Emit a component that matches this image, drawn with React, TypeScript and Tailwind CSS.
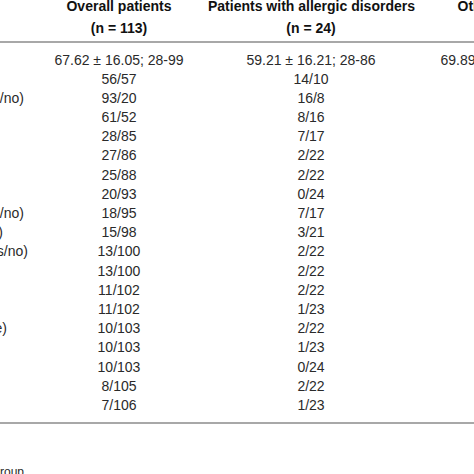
import React from "react";

type Row = { label: string; pr: string; a: string; b: string; c: string };

const rows: Row[] = [
  { label: "", pr: "pr-[6px]", a: "67.62 ± 16.05; 28-99", b: "59.21 ± 16.21; 28-86", c: "69.89 ± 15.36; 30-99" },
  { label: "", pr: "pr-[6px]", a: "56/57", b: "14/10", c: "42/47" },
  { label: "Hypertension (yes/no)", pr: "pr-[6px]", a: "93/20", b: "16/8", c: "77/12" },
  { label: "", pr: "pr-[6px]", a: "61/52", b: "8/16", c: "53/36" },
  { label: "", pr: "pr-[6px]", a: "28/85", b: "7/17", c: "21/68" },
  { label: "", pr: "pr-[6px]", a: "27/86", b: "2/22", c: "25/64" },
  { label: "", pr: "pr-[6px]", a: "25/88", b: "2/22", c: "23/66" },
  { label: "", pr: "pr-[6px]", a: "20/93", b: "0/24", c: "20/69" },
  { label: "Chronic kidney disease (yes/no)", pr: "pr-[6px]", a: "18/95", b: "7/17", c: "11/78" },
  { label: "Dementia (%)", pr: "pr-[27px]", a: "15/98", b: "3/21", c: "12/77" },
  { label: "Atrial fibrillation (yes/no)", pr: "pr-[2px]", a: "13/100", b: "2/22", c: "11/78" },
  { label: "", pr: "pr-[6px]", a: "13/100", b: "2/22", c: "11/78" },
  { label: "", pr: "pr-[6px]", a: "11/102", b: "2/22", c: "9/80" },
  { label: "", pr: "pr-[6px]", a: "11/102", b: "1/23", c: "10/79" },
  { label: "Hepatopathy (%e)", pr: "pr-[23px]", a: "10/103", b: "2/22", c: "8/81" },
  { label: "", pr: "pr-[6px]", a: "10/103", b: "1/23", c: "9/80" },
  { label: "", pr: "pr-[6px]", a: "10/103", b: "0/24", c: "10/79" },
  { label: "", pr: "pr-[6px]", a: "8/105", b: "2/22", c: "6/83" },
  { label: "", pr: "pr-[6px]", a: "7/106", b: "1/23", c: "6/83" },
];

export default function App() {
  return (
    <div
      className="w-[474px] h-[474px] overflow-hidden bg-white text-[#2a2a2a]"
      style={{ fontFamily: '"Liberation Sans", Arial, sans-serif' }}
    >
      <div className="w-[596px]">
        <div className="-mt-[5px] pb-[2px] border-b-2 border-[#a8a8a8] grid grid-cols-[30px_178px_206px_182px] text-[14px] leading-[22px] font-bold text-[#111]">
          <div />
          <div className="text-center whitespace-nowrap">Overall patients<br />(n = 113)</div>
          <div className="text-center whitespace-nowrap">Patients with allergic disorders<br />(n = 24)</div>
          <div className="text-center whitespace-nowrap">Other patients<br />(n = 89)</div>
        </div>
        <div className="pt-[7.5px] pb-[6.5px] border-b-2 border-[#a8a8a8] text-[14px] leading-[19.2px]">
          {rows.map((r, i) => (
            <div key={i} className="grid grid-cols-[30px_178px_206px_182px] h-[19.2px]">
              <div className={`flex justify-end whitespace-nowrap ${r.pr}`}>
                <span>{r.label}</span>
              </div>
              <div className="text-center whitespace-nowrap">{r.a}</div>
              <div className="text-center whitespace-nowrap">{r.b}</div>
              <div className="text-center whitespace-nowrap">{r.c}</div>
            </div>
          ))}
        </div>
        <div className="pt-[40px] text-[12px] leading-[16px]">
          <div className="w-[24px] flex justify-end whitespace-nowrap">
            <span>control group</span>
          </div>
        </div>
      </div>
    </div>
  );
}
